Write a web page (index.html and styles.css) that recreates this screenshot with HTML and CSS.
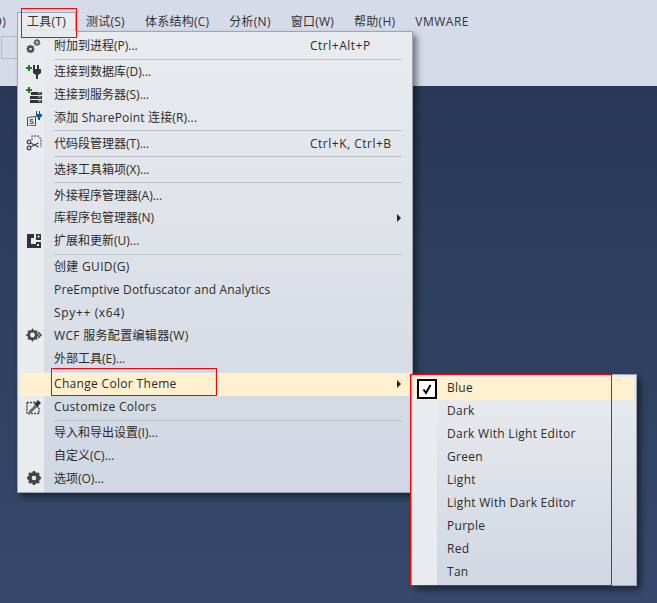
FILE: index.html
```html
<!DOCTYPE html>
<html lang="zh-CN">
<head>
<meta charset="utf-8">
<title>工具菜单</title>
<link rel="stylesheet" href="styles.css">
</head>
<body>
<header class="top">
  <nav class="menubar">
    <span class="mi first">D)</span>
    <span class="mi tab">工具(T)</span>
    <span class="mi">测试(S)</span>
    <span class="mi">体系结构(C)</span>
    <span class="mi">分析(N)</span>
    <span class="mi">窗口(W)</span>
    <span class="mi">帮助(H)</span>
    <span class="mi latin">VMWARE</span>
  </nav>
  <div class="toolbox"></div>
</header>
<main class="editor"></main>

<div class="menu">
  <div class="row"><span class="ic"><svg viewBox="0 0 16 16" width="16" height="16"><g fill="none" stroke="#444" stroke-width="1.6"><circle cx="4.5" cy="11" r="2.6"/><circle cx="11" cy="4.5" r="2.2" stroke="#666"/></g><g stroke="#444" stroke-width="1.2"><path d="M4.5 6.8v8.4M.3 11h8.4M1.5 8l6 6M7.5 8l-6 6"/><path d="M11 1v7M7.5 4.5h7M8.6 2.1l4.8 4.8M13.4 2.1L8.6 6.9" stroke="#666"/></g><circle cx="4.5" cy="11" r="1.3" fill="#e9ecee"/><circle cx="11" cy="4.5" r="1" fill="#e9ecee"/></svg></span><span class="lb">附加到进程(P)...</span><span class="sc">Ctrl+Alt+P</span></div>
  <div class="sep"></div>
  <div class="row"><span class="ic"><svg viewBox="0 0 16 16" width="16" height="16"><path d="M3 1v6M0 4h6" stroke="#1e7a1e" stroke-width="2"/><path d="M7 1h2v4h2V1h2v4h2v4l-3 2v4h-2v-4L7 9z" fill="#333"/></svg></span><span class="lb">连接到数据库(D)...</span></div>
  <div class="row"><span class="ic"><svg viewBox="0 0 16 16" width="16" height="16"><path d="M3 0v6M0 3h6" stroke="#1e7a1e" stroke-width="2"/><path d="M5 5h11v3H5zM4 9h12v3H4zM4 13h12v3H4z" fill="#333"/><path d="M12 6h3M12 10h3M12 14h3" stroke="#ccc"/></svg></span><span class="lb">连接到服务器(S)...</span></div>
  <div class="row"><span class="ic"><svg viewBox="0 0 16 16" width="16" height="16"><path d="M1.5 7.5l8-1v9l-8 .5z" fill="#eef0f2" stroke="#444"/><path d="M10 1h1v3h2V1h1v3h2v2l-2 2v2h-2V8l-2-2V4z" fill="#14569c"/><text x="3.2" y="14" class="dollar">S</text></svg></span><span class="lb sp2">添加 SharePoint 连接(R)...</span></div>
  <div class="sep"></div>
  <div class="row"><span class="ic"><svg viewBox="0 0 16 16" width="16" height="16"><g fill="none" stroke="#444" stroke-width="1.3"><circle cx="3" cy="7" r="1.8"/><circle cx="3" cy="13" r="1.8"/><path d="M4.5 8l8 4M4.5 12l8-4"/><path d="M6 5V1h6l3 3v8" stroke-dasharray="2 1" stroke="#666"/></g></svg></span><span class="lb">代码段管理器(T)...</span><span class="sc">Ctrl+K, Ctrl+B</span></div>
  <div class="sep"></div>
  <div class="row"><span class="lb">选择工具箱项(X)...</span></div>
  <div class="sep"></div>
  <div class="row nudge"><span class="lb">外接程序管理器(A)...</span></div>
  <div class="row"><span class="lb">库程序包管理器(N)</span><span class="arrow"></span></div>
  <div class="row"><span class="ic"><svg viewBox="0 0 16 16" width="16" height="16"><path d="M1 1h14v14H1z" fill="#333"/><path d="M8 1h2v4H8zM5 5h5v2h5v2h-5v2H5zM11.5 2.5h2v2h-2zM11 11h2v2h-2zM5 7h3v2H5z" fill="#e9ecee"/></svg></span><span class="lb">扩展和更新(U)...</span></div>
  <div class="sep"></div>
  <div class="row"><span class="lb sp3">创建 GUID(G)</span></div>
  <div class="row"><span class="lb sp2">PreEmptive Dotfuscator and Analytics</span></div>
  <div class="row"><span class="lb sp6">Spy++ (x64)</span></div>
  <div class="row"><span class="ic"><svg viewBox="0 0 16 16" width="16" height="16"><circle cx="6.5" cy="8" r="4" fill="none" stroke="#444" stroke-width="2.4"/><path d="M6.5 1.5v13M0 8h13M2 3.5l9 9M11 3.5l-9 9" stroke="#444" stroke-width="1.4"/><circle cx="6.5" cy="8" r="2.4" fill="#e9ecee"/><path d="M12 5l3 3-3 3" fill="none" stroke="#444" stroke-width="1.5"/></svg></span><span class="lb sp3">WCF 服务配置编辑器(W)</span></div>
  <div class="row nudge"><span class="lb">外部工具(E)...</span></div>
  <div class="sep hidden"></div>
  <div class="row active"><span class="lb sp3">Change Color Theme</span><span class="arrow"></span></div>
  <div class="row"><span class="ic"><svg viewBox="0 0 16 16" width="16" height="16"><path d="M1 3.5h8M1 3.5v11h12V9" fill="none" stroke="#444" stroke-width="1.5" stroke-dasharray="2 1"/><path d="M3 12l6-6 2 2-6 6H3z" fill="#666"/><path d="M9 4l3-3 3 3-3 3 1 1-1 1-4-4 1-1z" fill="#333"/></svg></span><span class="lb sp3">Customize Colors</span></div>
  <div class="sep"></div>
  <div class="row"><span class="lb">导入和导出设置(I)...</span></div>
  <div class="row"><span class="lb">自定义(C)...</span></div>
  <div class="row"><span class="ic"><svg viewBox="0 0 16 16" width="16" height="16"><circle cx="8" cy="8" r="4.6" fill="none" stroke="#444" stroke-width="3"/><path d="M8 1v14M1 8h14M3 3l10 10M13 3L3 13" stroke="#444" stroke-width="2.4"/><circle cx="8" cy="8" r="2.3" fill="#e4e7ea"/></svg></span><span class="lb">选项(O)...</span></div>
</div>

<div class="submenu">
  <div class="row active"><span class="check"><svg viewBox="0 0 12 12" width="12" height="12"><path d="M2.5 6.5L5 10l4.5-8" fill="none" stroke="#000" stroke-width="2"/></svg></span><span class="lb">Blue</span></div>
  <div class="row"><span class="lb">Dark</span></div>
  <div class="row"><span class="lb">Dark With Light Editor</span></div>
  <div class="row"><span class="lb">Green</span></div>
  <div class="row"><span class="lb">Light</span></div>
  <div class="row"><span class="lb">Light With Dark Editor</span></div>
  <div class="row"><span class="lb">Purple</span></div>
  <div class="row"><span class="lb">Red</span></div>
  <div class="row"><span class="lb">Tan</span></div>
</div>

<div class="mark mark-tab"></div>
<div class="mark mark-item"></div>
<div class="mark mark-sub"></div>
</body>
</html>
```

FILE: styles.css
```css
html, body {
  margin: 0;
  height: 100%;
}
body {
  width: 657px;
  height: 603px;
  overflow: hidden;
  position: relative;
  display: flex;
  flex-direction: column;
  font: 12px/16px "Open Sans", "Noto Sans CJK SC", sans-serif;
  color: #1e1e1e;
}
.top {
  height: 86px;
  flex: none;
  background: #d6dbe9;
  position: relative;
}
.menubar {
  display: flex;
  align-items: flex-start;
  padding: 13px 0 0 0;
  color: #333;
  letter-spacing: 0.25px;
}
.mi {
  height: 18px;
  line-height: 18px;
  padding: 0 10px;
  white-space: nowrap;
}
.mi.latin {
  letter-spacing: 0.5px;
}
.mi.first {
  width: 6px;
  padding: 0 11px 0 0;
  display: flex;
  justify-content: flex-end;
}
.tab {
  width: 38px;
  background: #e9ecee;
  border: 1px solid #9ba7b7;
  border-bottom: 0;
  padding: 0 10px 0 9px;
  margin-top: -1px;
}
.toolbox {
  position: absolute;
  left: 1px;
  top: 36px;
  width: 16px;
  height: 21px;
  border: 1px solid #b3bac8;
}
.editor {
  flex: 1;
  background: linear-gradient(#293955, #34496b);
}
.menu,
.submenu {
  position: absolute;
  box-sizing: border-box;
  border: 1px solid #9ba7b7;
  box-shadow: 4px 4px 6px rgba(0, 0, 0, 0.45);
}
.menu {
  left: 17px;
  top: 31px;
  width: 396px;
  height: 462px;
  padding: 3px 2px;
  background: linear-gradient(90deg, #e9ecee 0 26px, transparent 26px),
    linear-gradient(#e9ecee, #d0d7e3);
}
.menu::before {
  content: "";
  position: absolute;
  left: 0;
  top: -1px;
  width: 58px;
  height: 1px;
  background: #e9ecee;
}
.submenu {
  left: 411px;
  top: 374px;
  width: 226px;
  height: 212px;
  padding: 2px;
  background: linear-gradient(90deg, #e9ecee 0 25px, transparent 25px),
    linear-gradient(#e9ecee, #d0d7e3);
}
.row {
  height: 22.85px;
  display: flex;
  align-items: center;
  position: relative;
  white-space: nowrap;
  color: #2b2b2b;
}
.row.nudge .lb {
  padding-top: 1px;
}
.submenu .row {
  height: 23px;
}
.submenu .lb {
  letter-spacing: 0.28px;
  margin-left: 33px;
  padding-bottom: 2px;
}
.row.active {
  background: #fff0d0;
}
.ic {
  position: absolute;
  left: 6px;
  top: 3px;
  width: 16px;
  height: 16px;
}
.ic svg,
.check svg {
  display: block;
}
.dollar {
  font: bold 7px "Liberation Sans", sans-serif;
  fill: #444;
}
.lb {
  margin-left: 34px;
  flex: 1;
}
.sp2 {
  letter-spacing: 0.17px;
}
.sp3 {
  letter-spacing: 0.32px;
}
.sp6 {
  letter-spacing: 0.65px;
}
.sc {
  width: 100px;
  flex: none;
  letter-spacing: 0.5px;
}
.arrow {
  width: 0;
  height: 0;
  margin-right: 9px;
  border-left: 4px solid #222;
  border-top: 4px solid transparent;
  border-bottom: 4px solid transparent;
}
.sep {
  height: 1px;
  margin: 1px 8px 1px 34px;
  background: #bcc2cc;
}
.sep.hidden {
  background: transparent;
}
.check {
  position: absolute;
  left: 3px;
  top: 2px;
  width: 16px;
  height: 16px;
  border: 2px solid #000;
  background: #fff;
  display: flex;
  align-items: center;
  justify-content: center;
}
.mark {
  position: absolute;
  box-sizing: border-box;
  border: 1px solid #f00;
}
.mark-tab {
  left: 21px;
  top: 8px;
  width: 56px;
  height: 30px;
}
.mark-item {
  left: 51px;
  top: 368px;
  width: 166px;
  height: 28px;
}
.mark-sub {
  left: 410px;
  top: 374px;
  width: 202px;
  height: 212px;
}
```
